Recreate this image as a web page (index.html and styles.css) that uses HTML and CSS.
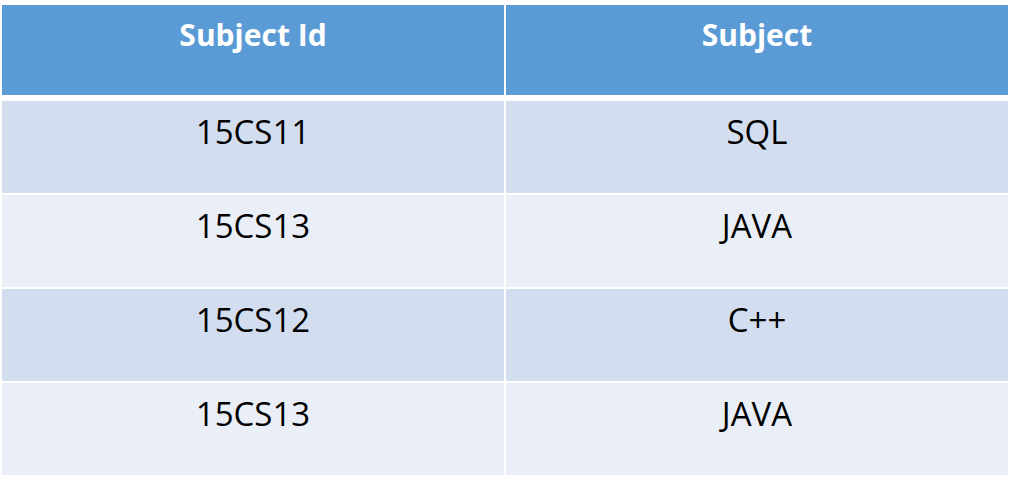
FILE: index.html
```html
<!DOCTYPE html>
<html>
<head>
<meta charset="utf-8">
<link rel="stylesheet" href="styles.css">
</head>
<body>
<div class="table">
  <div class="row head">
    <div class="cell">Subject Id</div>
    <div class="cell">Subject</div>
  </div>
  <div class="body">
    <div class="row odd">
      <div class="cell">15CS11</div>
      <div class="cell">SQL</div>
    </div>
    <div class="row even">
      <div class="cell">15CS13</div>
      <div class="cell">JAVA</div>
    </div>
    <div class="row odd">
      <div class="cell">15CS12</div>
      <div class="cell">C++</div>
    </div>
    <div class="row even">
      <div class="cell">15CS13</div>
      <div class="cell">JAVA</div>
    </div>
  </div>
</div>
</body>
</html>
```

FILE: styles.css
```css
html, body {
  margin: 0;
  padding: 0;
  background: #ffffff;
}
body {
  padding: 5px 0 0 2px;
}
.table {
  width: 1006px;
  font-family: "Open Sans", "Noto Sans", sans-serif;
  color: #000;
}
.body {
  display: flex;
  flex-direction: column;
  gap: 2px;
}
.row {
  display: grid;
  grid-template-columns: 502px 502px;
  column-gap: 2px;
  height: 92px;
}
.cell {
  text-align: center;
  font-size: 33px;
  line-height: 40px;
  padding-top: 11px;
}
.head {
  height: 90px;
  margin-bottom: 6px;
}
.head .cell {
  background: #5b9bd5;
  color: #fff;
  font-weight: 700;
  font-size: 30px;
  padding-top: 10px;
}
.odd .cell {
  background: #d2deef;
}
.even .cell {
  background: #eaeff7;
}
```
